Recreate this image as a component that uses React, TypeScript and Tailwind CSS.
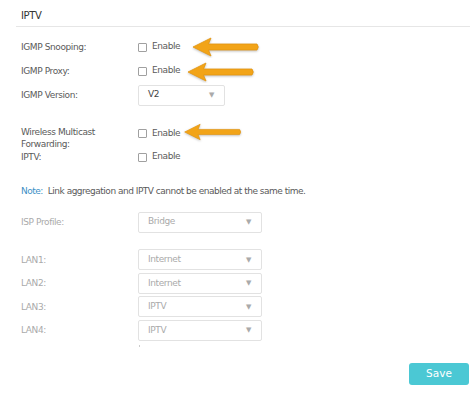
import React from "react";

const font = { fontFamily: '"DejaVu Sans", Verdana, sans-serif' };

function Arrow({ className }: { className: string }) {
  return (
    <svg
      className={`pointer-events-none absolute ${className}`}
      width="70"
      height="22"
      viewBox="0 0 70 22"
    >
      <path
        d="M2 11 L20 2 L17.5 8 L66 8 Q68.5 11 66 14 L17.5 14 L20 20 Z"
        fill="#f2a418"
        stroke="#e39510"
        strokeWidth="0.8"
        strokeLinejoin="round"
        style={{ filter: "drop-shadow(0 1px 1px rgba(0,0,0,0.25))" }}
      />
    </svg>
  );
}

function Check({ muted }: { muted?: boolean }) {
  return (
    <label className={`flex items-center gap-[5px] ${muted ? "text-[#aaa]" : "text-[#5a5a5a]"}`}>
      <span className="h-[9px] w-[9px] rounded-[1px] border border-[#a0a0a0] bg-white" />
      Enable
    </label>
  );
}

function Select({ value, w, muted }: { value: string; w: string; muted?: boolean }) {
  return (
    <div
      className={`flex h-[21px] ${w} items-center justify-between rounded-[2px] border border-[#e2e2e2] bg-white pl-[9px] pr-[10px] ${
        muted ? "text-[#aaa]" : "text-[#444]"
      }`}
    >
      <span>{value}</span>
      <span className="text-[7px] text-[#aaa]">▼</span>
    </div>
  );
}

function Row({
  label,
  children,
  h,
  muted,
}: {
  label: React.ReactNode;
  children: React.ReactNode;
  h: string;
  muted?: boolean;
}) {
  return (
    <div className={`flex ${h} items-center`}>
      <div className={`w-[117px] shrink-0 leading-[12px] ${muted ? "text-[#aaa]" : "text-[#5a5a5a]"}`}>
        {label}
      </div>
      {children}
    </div>
  );
}

export default function App() {
  return (
    <div
      className="relative h-[405px] w-[474px] bg-white text-[9px] tracking-[-0.4px]"
      style={font}
    >
      <div className="ml-[16px] mr-[4px] border-b border-[#e6e6e6] pl-[5px] pt-[8px] pb-[3px] text-[10px] text-[#333]">
        IPTV
      </div>

      <div className="pl-[21px]">
        <div className="h-[8px]" />
        <Row label="IGMP Snooping:" h="h-[24px]">
          <Check />
        </Row>
        <Row label="IGMP Proxy:" h="h-[24px]">
          <Check />
        </Row>
        <Row label="IGMP Version:" h="h-[24px]">
          <Select value="V2" w="w-[87px]" />
        </Row>

        <div className="h-[18px]" />
        <div className="flex h-[24px] items-start pt-[1px]">
          <div className="w-[117px] shrink-0 leading-[12px] text-[#5a5a5a]">
            Wireless Multicast
            <br />
            Forwarding:
          </div>
          <div className="pt-[1px]">
            <Check />
          </div>
        </div>
        <Row label="IPTV:" h="h-[16px]">
          <Check />
        </Row>

        <div className="mt-[21px] flex h-[12px] items-center gap-[5px] text-[9px] tracking-[-0.5px] text-[#5a5a5a]">
          <span className="text-[#3d8fc6]">Note:</span>
          <span>Link aggregation and IPTV cannot be enabled at the same time.</span>
        </div>

        <div className="h-[12px]" />
        <Row label="ISP Profile:" h="h-[24px]" muted>
          <Select value="Bridge" w="w-[124px]" muted />
        </Row>
        <div className="h-[14px]" />
        <Row label="LAN1:" h="h-[23.5px]" muted>
          <Select value="Internet" w="w-[124px]" muted />
        </Row>
        <Row label="LAN2:" h="h-[23.5px]" muted>
          <Select value="Internet" w="w-[124px]" muted />
        </Row>
        <Row label="LAN3:" h="h-[23.5px]" muted>
          <Select value="IPTV" w="w-[124px]" muted />
        </Row>
        <Row label="LAN4:" h="h-[23.5px]" muted>
          <Select value="IPTV" w="w-[124px]" muted />
        </Row>
        <div className="ml-[118px] mt-[3px] h-[2px] w-[1px] bg-[#ccc]" />
      </div>

      <div className="mt-[16px] flex justify-end pr-[5px]">
        <button className="h-[22px] w-[60px] rounded-[3px] bg-[#4bc8d4] text-[10.5px] tracking-normal text-white">
          Save
        </button>
      </div>

      <Arrow className="left-[191px] top-[36px]" />
      <Arrow className="left-[186px] top-[61px]" />
      <Arrow className="left-[183px] top-[121px] w-[60px]" />
    </div>
  );
}
